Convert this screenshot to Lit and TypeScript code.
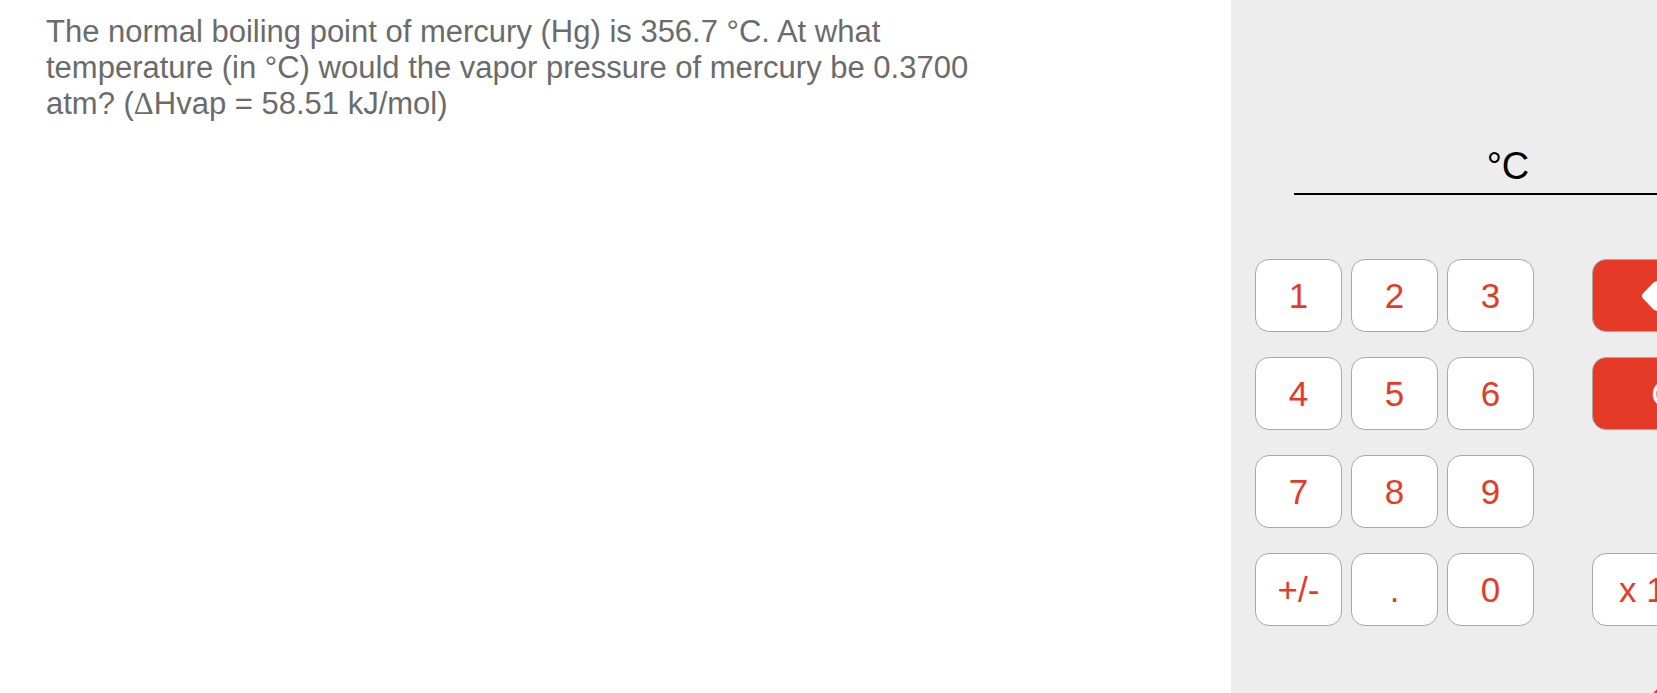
import { LitElement, html, css, svg } from "lit";
import { customElement, state } from "lit/decorators.js";

const DIGIT_KEYS = ["1", "2", "3", "4", "5", "6", "7", "8", "9", "+/-", ".", "0"];

const deleteIcon = svg`
  <svg class="icon" viewBox="0 0 44 30" aria-hidden="true">
    <path d="M16 0H40a4 4 0 0 1 4 4V26a4 4 0 0 1-4 4H16q-3 0-5-2L1 17.500Q-1 15 1 12.500L11 2q2-2 5-2Z" fill="#fff"/>
    <path d="M21 9l12 12M33 9L21 21" stroke="#e53a27" stroke-width="3" stroke-linecap="round"/>
  </svg>`;

@customElement("answer-keypad")
export class AnswerKeypad extends LitElement {
  static styles = css`
    :host {
      display: block;
    }
    .pad {
      display: flex;
      gap: 58px;
    }
    .digits {
      display: grid;
      grid-template-columns: repeat(3, 87px);
      grid-auto-rows: 73px;
      gap: 25px 9px;
    }
    .actions {
      display: grid;
      grid-template-columns: 144px;
      grid-template-rows: repeat(4, 73px);
      gap: 25px;
    }
    .key {
      display: flex;
      align-items: center;
      justify-content: center;
      padding: 0;
      border: 1px solid #a8a8a8;
      border-radius: 14px;
      background: #fff;
      color: #e53a27;
      font: 35px/40px "Liberation Sans", Arial, sans-serif;
      white-space: nowrap;
      cursor: pointer;
    }
    .solid {
      background: #e53a27;
      color: #fff;
    }
    .last {
      grid-row: 4;
      justify-content: flex-start;
      padding-left: 26px;
    }
    .icon {
      width: 44px;
      height: 30px;
    }
  `;

  private press(key: string) {
    this.dispatchEvent(new CustomEvent("key-press", { detail: key }));
  }

  render() {
    return html`
      <div class="pad">
        <div class="digits">
          ${DIGIT_KEYS.map(
            (k) => html`<button class="key" type="button" @click=${() => this.press(k)}>${k}</button>`
          )}
        </div>
        <div class="actions">
          <button class="key solid" type="button" aria-label="Delete" @click=${() => this.press("delete")}>
            ${deleteIcon}
          </button>
          <button class="key solid" type="button" @click=${() => this.press("clear")}>C</button>
          <button class="key last" type="button" @click=${() => this.press("x100")}>x 100</button>
        </div>
      </div>
    `;
  }
}

@customElement("app-root")
export class AppRoot extends LitElement {
  static styles = css`
    :host {
      display: block;
      overflow: hidden;
      height: 100vh;
      background: #fff;
      font-family: "Liberation Sans", Arial, sans-serif;
    }
    .page {
      display: grid;
      grid-template-columns: 1fr 554px;
      width: calc(100% + 128px);
      min-height: 100%;
    }
    .question {
      max-width: 960px;
      margin: 0;
      padding: 14px 46px;
      color: #6b6b6b;
      font-size: 31px;
      line-height: 36px;
    }
    .delta {
      font-family: "Liberation Serif", serif;
    }
    .panel {
      display: flex;
      flex-direction: column;
      background: #ededed;
    }
    .answer {
      margin: 142px 63px 64px;
      padding-bottom: 3px;
      border-bottom: 2px solid #000;
      color: #000;
      font-size: 38px;
      line-height: 48px;
      text-align: center;
    }
    .keypad {
      padding-left: 24px;
    }
    .more {
      align-self: flex-end;
      margin: 54px 104px 0 0;
      padding: 0;
      border: 0;
      background: none;
      cursor: pointer;
    }
    .chevron {
      display: block;
      width: 32px;
      height: 20px;
    }
  `;

  @state() private value = "";

  private onKey(e: CustomEvent<string>) {
    const key = e.detail;
    if (key === "clear") this.value = "";
    else if (key === "delete") this.value = this.value.slice(0, -1);
    else if (key === "+/-") this.value = this.value.startsWith("-") ? this.value.slice(1) : "-" + this.value;
    else if (key === "x100") this.value = this.value ? String(Number(this.value) * 100) : "";
    else this.value += key;
  }

  render() {
    return html`
      <div class="page">
        <main>
          <p class="question">
            The normal boiling point of mercury (Hg) is 356.7 °C. At what temperature (in °C) would the
            vapor pressure of mercury be 0.3700 atm? (<span class="delta">Δ</span>Hvap = 58.51 kJ/mol)
          </p>
        </main>
        <aside class="panel">
          <div class="answer">${this.value} °C</div>
          <answer-keypad class="keypad" @key-press=${this.onKey}></answer-keypad>
          <button class="more" type="button" aria-label="More">
            <svg class="chevron" viewBox="0 0 32 20" aria-hidden="true">
              <path d="M2 18L16 4L30 18" fill="none" stroke="#e53a27" stroke-width="4" />
            </svg>
          </button>
        </aside>
      </div>
    `;
  }
}
